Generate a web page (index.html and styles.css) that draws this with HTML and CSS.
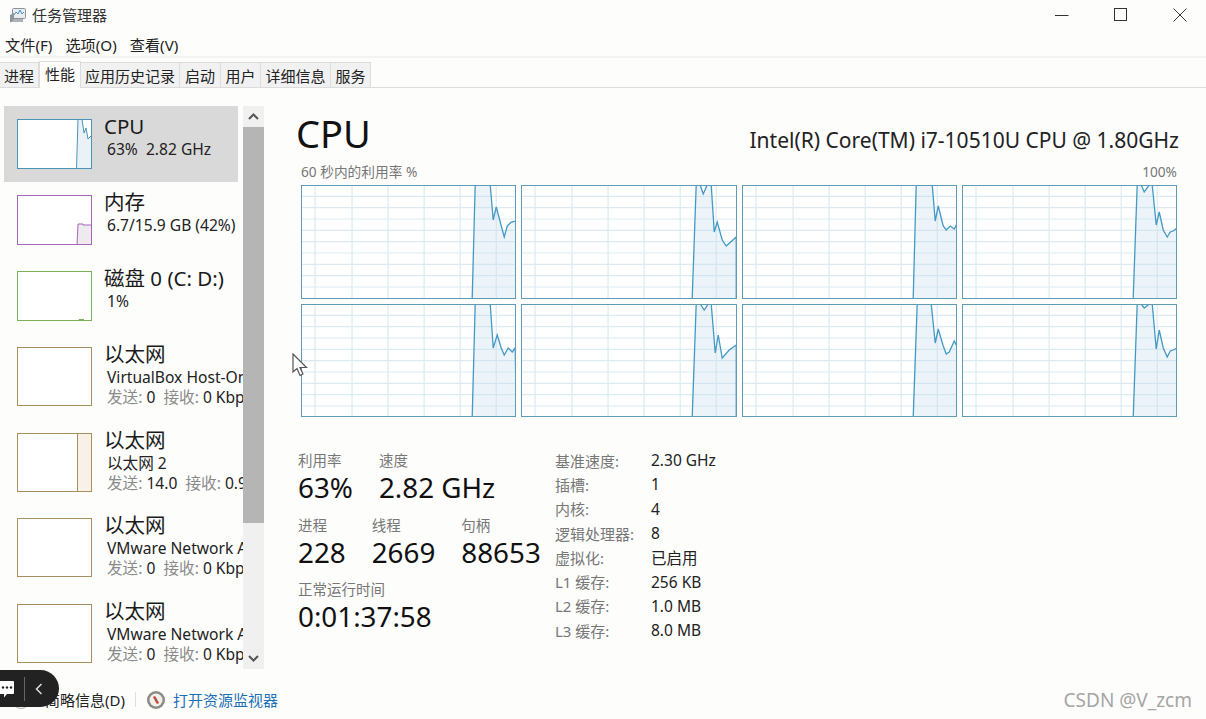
FILE: index.html
```html
<!DOCTYPE html>
<html lang="zh-CN">
  <head>
    <meta charset="UTF-8" />
    <title>任务管理器</title>
    <link rel="stylesheet" href="styles.css">
  </head>
  <body>
    <svg class="defs" width="0" height="0">
      <symbol id="grid" viewBox="0 0 215 113.5" preserveAspectRatio="none">
        <path class="gridline" d="M0 11.3H215M0 22.6H215M0 34H215M0 45.3H215M0 56.6H215M0 68H215M0 79.3H215M0 90.6H215M0 102H215M14 0V113.5M51 0V113.5M87 0V113.5M123 0V113.5M159 0V113.5M195 0V113.5" />
      </symbol>
    </svg>

    <div class="window">
      <!-- Title bar -->
      <div class="titlebar">
        <svg class="app-icon" width="18" height="16" viewBox="0 0 18 16">
          <rect x="3.500" y="1.500" width="13" height="10" rx="1" fill="#e8edf0" stroke="#8a9298" />
          <path d="M5 8l2-3 2 2 2-4 2 4 2-2" fill="none" stroke="#4a8fc0" />
          <path d="M1 8l4-2v8l-4 1.500z" fill="#8f969b" />
          <path d="M5 12h9v3H3z" fill="#aeb3b7" />
        </svg>
        <span class="app-title">任务管理器</span>
        <div class="win-btns">
          <svg width="14" height="14" viewBox="0 0 14 14"><path d="M0 7.500H13.500" /></svg>
          <svg width="14" height="14" viewBox="0 0 14 14"><rect x="0.500" y="0.500" width="12" height="12" /></svg>
          <svg width="14" height="14" viewBox="0 0 14 14"><path d="M0.500 0.500L13.500 13.500M13.500 0.500L0.500 13.500" /></svg>
        </div>
      </div>

      <!-- Menu -->
      <div class="menubar">
        <span>文件(F)</span>
        <span>选项(O)</span>
        <span>查看(V)</span>
      </div>

      <!-- Tabs -->
      <div class="tabs">
        <span class="tab t-first">进程</span>
        <span class="tab active">性能</span>
        <span class="tab t-b">应用历史记录</span>
        <span class="tab t-d">启动</span>
        <span class="tab t-a">用户</span>
        <span class="tab t-c">详细信息</span>
        <span class="tab t-a">服务</span>
      </div>

      <div class="content">
        <!-- Left list -->
        <div class="sidebar">
          <div class="item selected">
            <svg class="thumb cpu" viewBox="0 0 75 50" preserveAspectRatio="none">
              <path class="cpu-fill" d="M59.500 50L61 0H65L67 14L69 9L71 20L75 16V50Z" />
            </svg>
            <div class="item-text">
              <div class="item-name">CPU</div>
              <div class="item-sub">63%&nbsp; 2.82 GHz</div>
            </div>
          </div>
          <div class="item">
            <svg class="thumb mem" viewBox="0 0 75 50" preserveAspectRatio="none">
              <path class="mem-fill" d="M60 50L61 29H66V30H75V50Z" />
            </svg>
            <div class="item-text">
              <div class="item-name">内存</div>
              <div class="item-sub">6.7/15.9 GB (42%)</div>
            </div>
          </div>
          <div class="item">
            <svg class="thumb disk" viewBox="0 0 75 50" preserveAspectRatio="none">
              <path class="disk-fill" d="M61 50L62 48H67V50Z" />
            </svg>
            <div class="item-text">
              <div class="item-name">磁盘 0 (C: D:)</div>
              <div class="item-sub">1%</div>
            </div>
          </div>
          <div class="item net">
            <svg class="thumb eth" viewBox="0 0 75 59" preserveAspectRatio="none"></svg>
            <div class="item-text">
              <div class="item-name">以太网</div>
              <div class="item-sub">VirtualBox Host-Only Network</div>
              <div class="item-sub"><span class="dim">发送:</span> 0 &nbsp;<span class="dim">接收:</span> 0 Kbps</div>
            </div>
          </div>
          <div class="item net">
            <svg class="thumb eth" viewBox="0 0 75 59" preserveAspectRatio="none">
              <path class="eth-fill" d="M60.500 0H75V59H60.500Z" />
            </svg>
            <div class="item-text">
              <div class="item-name">以太网</div>
              <div class="item-sub">以太网 2</div>
              <div class="item-sub"><span class="dim">发送:</span> 14.0 &nbsp;<span class="dim">接收:</span> 0.9 Kbps</div>
            </div>
          </div>
          <div class="item net">
            <svg class="thumb eth" viewBox="0 0 75 59" preserveAspectRatio="none"></svg>
            <div class="item-text">
              <div class="item-name">以太网</div>
              <div class="item-sub">VMware Network Adapter</div>
              <div class="item-sub"><span class="dim">发送:</span> 0 &nbsp;<span class="dim">接收:</span> 0 Kbps</div>
            </div>
          </div>
          <div class="item net">
            <svg class="thumb eth" viewBox="0 0 75 59" preserveAspectRatio="none"></svg>
            <div class="item-text">
              <div class="item-name">以太网</div>
              <div class="item-sub">VMware Network Adapter</div>
              <div class="item-sub"><span class="dim">发送:</span> 0 &nbsp;<span class="dim">接收:</span> 0 Kbps</div>
            </div>
          </div>
        </div>

        <div class="scrollbar">
          <div class="sb-btn">
            <svg width="11" height="7" viewBox="0 0 11 7"><path d="M1 6L5.500 1.500L10 6" /></svg>
          </div>
          <div class="sb-thumb"></div>
          <div class="sb-track"></div>
          <div class="sb-btn">
            <svg width="11" height="7" viewBox="0 0 11 7"><path d="M1 1L5.500 5.500L10 1" /></svg>
          </div>
        </div>

        <!-- Main panel -->
        <div class="main">
          <div class="main-head">
            <h1>CPU</h1>
            <div class="cpu-model">Intel(R) Core(TM) i7-10510U CPU @ 1.80GHz</div>
          </div>
          <div class="chart-labels">
            <span>60 秒内的利用率 %</span>
            <span>100%</span>
          </div>
          <div class="charts">
            <svg class="core" viewBox="0 0 215 113.5" preserveAspectRatio="none">
              <use href="#grid" width="215" height="113.5" />
              <polyline class="load" points="171,113.5 174,0 189,0 192,35 195,22 203,52 206,41 210,37 215,36 215,113.5" />
            </svg>
            <svg class="core" viewBox="0 0 215 113.5" preserveAspectRatio="none">
              <use href="#grid" width="215" height="113.5" />
              <polyline class="load" points="171,113.5 175,0 179,0 182,9 186,0 190,0 193,47 196,37 201,55 205,61 215,52 215,113.5" />
            </svg>
            <svg class="core" viewBox="0 0 215 113.5" preserveAspectRatio="none">
              <use href="#grid" width="215" height="113.5" />
              <polyline class="load" points="171,113.5 174,0 190,0 193,36 196,21 201,41 204,45 208,41 212,44 215,38 215,113.5" />
            </svg>
            <svg class="core" viewBox="0 0 215 113.5" preserveAspectRatio="none">
              <use href="#grid" width="215" height="113.5" />
              <polyline class="load" points="171,113.5 175,0 179,0 182,7 187,0 190,0 194,40 197,27 201,45 205,52 208,47 211,46 215,43 215,113.5" />
            </svg>
            <svg class="core" viewBox="0 0 215 113.5" preserveAspectRatio="none">
              <use href="#grid" width="215" height="113.5" />
              <polyline class="load" points="171,113.5 174,0 189,0 192,44 196,31 200,44 203,51 207,44 211,48 214,44 215,113.5" />
            </svg>
            <svg class="core" viewBox="0 0 215 113.5" preserveAspectRatio="none">
              <use href="#grid" width="215" height="113.5" />
              <polyline class="load" points="171,113.5 175,0 179,0 183,6 187,0 190,0 194,49 197,31 201,54 208,46 215,41 215,113.5" />
            </svg>
            <svg class="core" viewBox="0 0 215 113.5" preserveAspectRatio="none">
              <use href="#grid" width="215" height="113.5" />
              <polyline class="load" points="171,113.5 175,0 189,0 193,39 196,25 201,42 204,50 207,48 212,37 215,43 215,113.5" />
            </svg>
            <svg class="core" viewBox="0 0 215 113.5" preserveAspectRatio="none">
              <use href="#grid" width="215" height="113.5" />
              <polyline class="load" points="171,113.5 175,0 179,0 182,4 187,0 190,0 194,45 197,26 201,44 205,53 208,47 211,46 215,44 215,113.5" />
            </svg>
          </div>

          <div class="stats">
            <div class="stats-left">
              <div class="stat-row">
                <div>
                  <div class="stat-label">利用率</div>
                  <div class="stat-value">63%</div>
                </div>
                <div>
                  <div class="stat-label">速度</div>
                  <div class="stat-value">2.82 GHz</div>
                </div>
              </div>
              <div class="stat-row">
                <div>
                  <div class="stat-label">进程</div>
                  <div class="stat-value">228</div>
                </div>
                <div>
                  <div class="stat-label">线程</div>
                  <div class="stat-value">2669</div>
                </div>
                <div>
                  <div class="stat-label">句柄</div>
                  <div class="stat-value">88653</div>
                </div>
              </div>
              <div class="stat-row">
                <div>
                  <div class="stat-label">正常运行时间</div>
                  <div class="stat-value">0:01:37:58</div>
                </div>
              </div>
            </div>
            <div class="specs">
              <span>基准速度:</span><b>2.30 GHz</b>
              <span>插槽:</span><b>1</b>
              <span>内核:</span><b>4</b>
              <span>逻辑处理器:</span><b>8</b>
              <span>虚拟化:</span><b>已启用</b>
              <span>L1 缓存:</span><b>256 KB</b>
              <span>L2 缓存:</span><b>1.0 MB</b>
              <span>L3 缓存:</span><b>8.0 MB</b>
            </div>
          </div>
        </div>
      </div>

      <!-- Footer -->
      <div class="footer">
        <svg class="less-icon" width="18" height="18" viewBox="0 0 18 18"><circle cx="9" cy="9" r="8.500" /></svg>
        <span class="less">简略信息(D)</span>
        <span class="divider"></span>
        <svg class="monitor-icon" width="20" height="20" viewBox="0 0 20 20">
          <circle cx="10" cy="10" r="9" fill="#8d8a86" />
          <circle cx="10" cy="10" r="6.500" fill="#f4efe9" />
          <path d="M8 6.500L12 13.500" stroke="#c8452f" stroke-width="2.500" />
          <circle cx="10" cy="10" r="1" fill="#6e6a66" />
        </svg>
        <span class="link">打开资源监视器</span>
        <span class="watermark">CSDN @V_zcm</span>
      </div>

      <!-- Overlays -->
      <svg class="cursor" width="16" height="24" viewBox="0 0 16 24">
        <path d="M1 1V19L5 15.500L8 22.500L11 21L8 14.500H14.500Z" />
      </svg>
      <div class="pill">
        <svg width="15" height="18" viewBox="0 0 15 18">
          <path d="M-2 1H13Q14 1 14 2V13Q14 14 13 14H7L4 17.500V14H-2Z" fill="#fff" />
          <circle cx="3" cy="7.500" r="1.200" fill="#222" />
          <circle cx="7" cy="7.500" r="1.200" fill="#222" />
          <circle cx="11" cy="7.500" r="1.200" fill="#222" />
        </svg>
        <span class="pill-sep"></span>
        <svg class="pill-arrow" width="8" height="12" viewBox="0 0 8 12"><path d="M6.500 1L1.500 6L6.500 11" /></svg>
      </div>
    </div>
  </body>
</html>
```

FILE: styles.css
```css
* {
  box-sizing: border-box;
  margin: 0;
  padding: 0;
}

body {
  background: #fff;
  font-family: "Noto Sans", "Noto Sans CJK SC", sans-serif;
  color: #222;
}

.defs {
  position: absolute;
}

.window {
  position: relative;
  width: 1206px;
  height: 719px;
  overflow: hidden;
  display: flex;
  flex-direction: column;
  background: #fdfdfc;
}

/* title bar */
.titlebar {
  height: 30px;
  flex: none;
  display: flex;
  align-items: center;
  padding-left: 9px;
}

.app-title {
  margin-left: 5px;
  margin-bottom: 2px;
  font-size: 15px;
  color: #333;
}

.win-btns {
  margin-left: auto;
  display: flex;
  gap: 45px;
  padding-right: 19px;
}

.win-btns svg {
  display: block;
  fill: none;
  stroke: #333;
  stroke-width: 1;
}

/* menu and tabs */
.menubar {
  height: 28px;
  flex: none;
  display: flex;
  align-items: center;
  gap: 13px;
  padding: 2px 0 0 5px;
  border-bottom: 2px solid #f3f3f3;
  font-size: 15.200px;
}

.tabs {
  height: 30px;
  flex: none;
  display: flex;
  align-items: flex-end;
  border-bottom: 1px solid #dcdcdc;
}

.tab {
  height: 25px;
  display: flex;
  align-items: center;
  justify-content: center;
  background: #f1f1f1;
  border-right: 1px solid #dcdcdc;
  border-top: 1px solid #dcdcdc;
  font-size: 15px;
}

.t-first {
  width: 39px;
}

.t-a {
  width: 40px;
}

.t-b {
  width: 99px;
}

.t-c {
  width: 70px;
}

.t-d {
  width: 41px;
}

.tab.active {
  width: 42px;
  height: 27px;
  margin-bottom: -1px;
  background: #fdfdfc;
  border-left: 1px solid #dcdcdc;
  padding-bottom: 3px;
}

/* sidebar */
.content {
  flex: 1;
  display: flex;
  padding-top: 18px;
  min-height: 0;
}

.sidebar {
  width: 243px;
  height: 563px;
  flex: none;
  overflow: hidden;
  padding-left: 4px;
}

.item {
  width: 234px;
  height: 76px;
  display: flex;
  align-items: flex-start;
  padding: 13px 0 0 13px;
}

.item.net {
  height: 85.500px;
}

.selected {
  background: #d9d9d9;
}

.thumb {
  width: 75px;
  height: 50px;
  flex: none;
  background: #fff;
  outline: 1.500px solid;
  outline-offset: -1.500px;
}

.cpu {
  color: #4a94b5;
}

.mem {
  color: #a567b5;
}

.disk {
  color: #7cb15c;
}

.eth {
  height: 59px;
  color: #a98e5f;
}

.cpu-fill {
  fill: #eaf2f8;
  stroke: #4a94b5;
}

.mem-fill {
  fill: #eeeaee;
  stroke: #a567b5;
}

.disk-fill {
  fill: #7cb15c;
}

.eth-fill {
  fill: #f8f1e8;
  stroke: #a98e5f;
}

.item-text {
  margin-left: 12px;
  margin-top: -5px;
  white-space: nowrap;
}

.item-name {
  font-size: 20.500px;
  line-height: 25px;
  color: #1a1a1a;
}

.item-sub {
  margin-left: 3px;
  font-size: 15.600px;
  line-height: 20px;
}

.dim {
  color: #8a8a8a;
}

/* scrollbar */
.scrollbar {
  width: 21px;
  height: 563px;
  flex: none;
  display: flex;
  flex-direction: column;
  background: #f0f0f0;
}

.sb-btn {
  height: 21px;
  flex: none;
  display: flex;
  align-items: center;
  justify-content: center;
}

.sb-btn svg {
  fill: none;
  stroke: #555;
  stroke-width: 2;
}

.sb-thumb {
  height: 396px;
  flex: none;
  background: #b5b5b5;
}

.sb-track {
  flex: 1;
}

/* main panel */
.main {
  flex: 1;
  margin-left: 33px;
  min-width: 0;
}

.main-head {
  display: flex;
  justify-content: space-between;
  align-items: baseline;
  padding-right: 27px;
}

h1 {
  margin-left: -1px;
  font-size: 38px;
  font-weight: 400;
  line-height: 54px;
  color: #111;
}

.cpu-model {
  font-size: 21px;
  color: #222;
}

.chart-labels {
  display: flex;
  justify-content: space-between;
  margin: 0 29px 0 4px;
  height: 22px;
  align-items: center;
  font-size: 13.700px;
  color: #777;
}

.charts {
  display: grid;
  grid-template-columns: repeat(4, 1fr);
  grid-auto-rows: 113.500px;
  gap: 5px;
  margin: 3px 29px 0 4px;
}

.core {
  display: block;
  width: 100%;
  height: 100%;
  background: #fff;
  outline: 1.500px solid #5f9bb7;
  outline-offset: -1px;
}

.gridline {
  fill: none;
  stroke: #dcebf2;
  stroke-width: 1.200;
}

.load {
  fill: rgba(190, 215, 235, 0.28);
  stroke: #4499c4;
  stroke-width: 1.300;
}

/* numbers under the charts */
.stats {
  display: flex;
  margin-top: 31px;
}

.stats-left {
  width: 258px;
  flex: none;
  padding: 2px 0 0 1px;
}

.stat-row {
  display: flex;
  gap: 26px;
  margin-bottom: 10.500px;
}

.stat-label {
  font-size: 14.500px;
  line-height: 20px;
  color: #777;
}

.stat-value {
  font-size: 27.800px;
  line-height: 34px;
  color: #111;
}

.specs {
  display: grid;
  grid-template-columns: 96px auto;
  grid-auto-rows: 24.300px;
  align-items: center;
  justify-content: start;
  font-size: 15px;
}

.specs span {
  color: #777;
}

.specs b {
  font-weight: 400;
  font-size: 15.500px;
  color: #222;
}

/* footer */
.footer {
  flex: none;
  height: 39px;
  margin-top: auto;
  display: flex;
  align-items: center;
  padding: 0 14px 0 12px;
  font-size: 15px;
}

.less-icon {
  flex: none;
  fill: #fff;
  stroke: #aaa;
}

.less {
  margin-left: 15px;
}

.divider {
  width: 1px;
  height: 15px;
  margin-left: 10px;
  background: #ddd;
}

.monitor-icon {
  margin-left: 10px;
}

.link {
  margin-left: 7px;
  color: #1c70b8;
}

.watermark {
  margin-left: auto;
  font-size: 19px;
  color: #a6a6a6;
}

/* things lying over the window */
.cursor {
  position: absolute;
  left: 292px;
  top: 353px;
  fill: #fff;
  stroke: #555;
  stroke-width: 1.200;
}

.pill {
  position: absolute;
  left: 0;
  top: 670px;
  width: 59px;
  height: 37px;
  display: flex;
  align-items: center;
  background: #222;
  border-radius: 0 19px 19px 0;
}

.pill-sep {
  width: 1px;
  height: 24px;
  margin-left: 9px;
  background: #666;
}

.pill-arrow {
  margin-left: 10px;
  fill: none;
  stroke: #ddd;
  stroke-width: 1.500;
}
```
